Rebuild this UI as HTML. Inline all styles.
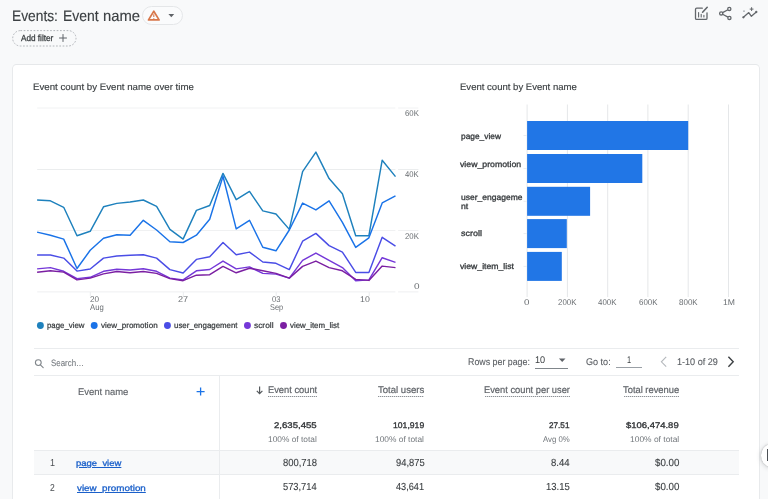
<!DOCTYPE html>
<html lang="en">
<head>
<meta charset="utf-8">
<title>Events: Event name</title>
<style>
  html, body { margin:0; padding:0; }
  body { width:768px; height:499px; overflow:hidden; background:#f8f9fa;
         font-family:"Liberation Sans", sans-serif; color:#3c4043; }
  #page { position:absolute; left:0; top:0; width:768px; height:499px; overflow:hidden; will-change:transform; }
  .t { position:absolute; white-space:nowrap; line-height:1; transform-origin:left top; text-rendering:geometricPrecision; }
  .sx { display:inline-block; transform-origin:left top; }
  .w { position:absolute; top:0; transform-origin:left top; }
  .dash { position:absolute; height:1px; background:repeating-linear-gradient(90deg, #8d9196 0 1px, #dcdee0 1px 2px); }
  #card { position:absolute; left:12.8px; top:64.8px; width:746.3px; height:460px; background:#fff;
          border-radius:3.5px; box-shadow:0 0 0 0.9px #e6e8ea, 0 1px 2px rgba(60,64,67,.06); }
  .hl { position:absolute; height:1px; background:#eaecee; }
  .chip { position:absolute; box-sizing:border-box; }
  svg { position:absolute; left:0; top:0; overflow:visible; }
  a.lnk { color:inherit; text-decoration:underline; text-decoration-thickness:0.8px; text-underline-offset:0.8px; }
</style>
</head>
<body>
<div id="page">

<!-- header chips -->
<div class="chip" style="left:142.4px; top:6.2px; width:40.4px; height:18.7px; border:1px solid #e4e6e8; border-radius:10px; background:#fafbfc;"></div>

<div id="card"></div>

<!-- table rules / row backgrounds -->
<div class="hl" style="left:34px; top:348px; width:705px;"></div>
<div class="hl" style="left:34px; top:375px; width:705px;"></div>
<div style="position:absolute; left:34px; top:450px; width:705px; height:24.5px; background:#f8f9fa; border-top:1px solid #eaecee; border-bottom:1px solid #eaecee; box-sizing:border-box;"></div>
<div style="position:absolute; left:219px; top:375px; width:1px; height:124px; background:#eaecee;"></div>
<div class="hl" style="left:535px; top:367.5px; width:32.5px; background:#80868b;"></div>
<div class="hl" style="left:616px; top:367px; width:26px; background:#9aa0a6;"></div>

<svg width="768" height="499" viewBox="0 0 768 499">
  <!-- header icons -->
  <g id="warn" fill="none" stroke="#d8774a" stroke-width="1.7" stroke-linejoin="round">
    <path d="M153.8 11.2 L159.1 19.9 L148.5 19.9 Z"/>
    <path d="M153.8 14.2 V17 M153.8 18 V18.8" stroke-width="1.1"/>
  </g>
  <path d="M168.4 14.1 h5.8 l-2.9 3.1 z" fill="#5f6368"/>
  <rect x="12.7" y="30.6" width="63.3" height="15.4" rx="7.7" fill="none" stroke="#a9adb2" stroke-width="0.9" stroke-dasharray="1.7 1.6"/>
  <path d="M63 34.1 v7.8 M59.1 38 h7.8" stroke="#5f6368" stroke-width="1" fill="none"/>

  <g id="ic-edit" fill="none" stroke="#63676b" stroke-width="1.3" stroke-linejoin="round" stroke-linecap="round">
    <path d="M702.3 8.2 H696.7 a1.2 1.2 0 0 0 -1.2 1.2 V18.2 a1.2 1.2 0 0 0 1.2 1.2 H705.8 a1.2 1.2 0 0 0 1.2 -1.2 V12.8"/>
    <path d="M698.6 12.6 V16.9 M701.2 14.2 V16.9 M703.9 15.2 V16.9" stroke-width="1.1"/>
    <path d="M702.6 12.2 L707.2 7.3" stroke-width="1.6"/>
  </g>
  <g id="ic-share" fill="none" stroke="#63676b" stroke-width="1.3">
    <circle cx="729.3" cy="8.9" r="1.6"/><circle cx="721.2" cy="13.4" r="1.6"/><circle cx="729.4" cy="17.9" r="1.6"/>
    <path d="M722.6 12.6 L727.9 9.7 M722.6 14.2 L728 17.1"/>
  </g>
  <g id="ic-ins" fill="none" stroke="#63676b" stroke-width="1.3" stroke-linejoin="round" stroke-linecap="round">
    <path d="M743.4 17.3 L748.8 12.6 L751.4 16.3 L756.3 12"/>
    <circle cx="743.4" cy="17.3" r="0.5"/><circle cx="756.3" cy="12" r="0.5"/>
    <path d="M751.6 7.6 V10.6 M750.1 9.1 H753.1" stroke-width="1"/>
    <path d="M743.6 11.1 h0.8" stroke-width="1.2" stroke="#9aa0a6"/>
  </g>

  <!-- line chart -->
  <path d="M37.2 108.0 H395.4 M398.1 108.0 H418.4" stroke="#f1f2f3" stroke-width="1" fill="none"/>
  <path d="M37.2 169.5 H395.4 M398.1 169.5 H418.4" stroke="#ebedee" stroke-width="1" fill="none"/>
  <path d="M37.2 230.5 H395.4 M398.1 230.5 H418.4" stroke="#f0f1f2" stroke-width="1" fill="none"/>
  <path d="M37.2 291.9 H395.4 M398.1 291.9 H418.4" stroke="#eeeff1" stroke-width="1" fill="none"/>
  <g stroke="#ebedef" stroke-width="1">
    <line x1="90.3" x2="90.3" y1="292" y2="296"/><line x1="183.3" x2="183.3" y1="292" y2="296"/>
    <line x1="276.2" x2="276.2" y1="292" y2="296"/><line x1="369.2" x2="369.2" y1="292" y2="296"/>
  </g>
  <polyline points="37.1,200.0 50.4,200.8 63.7,207.3 77.0,235.7 90.2,231.3 103.5,206.8 116.8,203.4 130.1,202.0 143.3,200.0 156.6,206.3 169.9,229.4 183.1,239.1 196.4,210.4 209.7,205.5 223.0,173.4 236.2,199.7 249.5,191.4 262.8,210.9 276.0,214.0 289.3,229.4 302.6,171.6 315.9,152.1 329.1,178.6 342.4,193.8 355.7,235.7 368.9,235.7 382.2,160.2 395.5,176.6" fill="none" stroke="#1e81bd" stroke-width="1.45" stroke-linejoin="round" stroke-linecap="butt"/>
  <polyline points="37.1,232.1 50.4,235.2 63.7,239.1 77.0,268.5 90.2,250.3 103.5,238.3 116.8,234.7 130.1,235.2 143.3,220.3 156.6,230.0 169.9,241.7 183.1,242.5 196.4,235.2 209.7,219.3 223.0,176.3 236.2,228.9 249.5,220.3 262.8,247.2 276.0,250.8 289.3,230.0 302.6,203.1 315.9,209.9 329.1,200.8 342.4,222.4 355.7,247.4 368.9,237.8 382.2,202.9 395.5,195.8" fill="none" stroke="#1a73e8" stroke-width="1.45" stroke-linejoin="round" stroke-linecap="butt"/>
  <polyline points="37.1,255.0 50.4,255.0 63.7,258.1 77.0,271.1 90.2,269.0 103.5,258.1 116.8,256.0 130.1,255.3 143.3,254.7 156.6,258.1 169.9,269.6 183.1,273.0 196.4,259.4 209.7,256.8 223.0,242.5 236.2,254.7 249.5,252.1 262.8,262.0 276.0,263.3 289.3,269.6 302.6,241.2 315.9,233.4 329.1,245.6 342.4,252.1 355.7,272.4 368.9,272.4 382.2,237.3 395.5,246.1" fill="none" stroke="#4a4de6" stroke-width="1.45" stroke-linejoin="round" stroke-linecap="butt"/>
  <polyline points="37.1,268.9 50.4,267.6 63.7,271.3 77.0,278.6 90.2,277.3 103.5,271.3 116.8,269.2 130.1,270.0 143.3,268.7 156.6,271.3 169.9,278.1 183.1,279.9 196.4,270.8 209.7,269.5 223.0,261.1 236.2,268.9 249.5,266.9 262.8,273.4 276.0,274.1 289.3,278.1 302.6,260.4 315.9,253.1 329.1,260.4 342.4,267.6 355.7,280.7 368.9,279.9 382.2,257.7 395.5,262.4" fill="none" stroke="#7538d8" stroke-width="1.45" stroke-linejoin="round" stroke-linecap="butt"/>
  <polyline points="37.1,272.3 50.4,270.8 63.7,272.1 77.0,279.9 90.2,278.1 103.5,273.9 116.8,271.5 130.1,272.8 143.3,271.5 156.6,273.4 169.9,278.6 183.1,280.7 196.4,275.2 209.7,274.7 223.0,266.4 236.2,272.8 249.5,268.2 262.8,270.8 276.0,273.4 289.3,278.1 302.6,266.4 315.9,261.1 329.1,267.6 342.4,270.8 355.7,279.4 368.9,280.4 382.2,266.1 395.5,267.6" fill="none" stroke="#7b1fa2" stroke-width="1.45" stroke-linejoin="round" stroke-linecap="butt"/>

  <!-- legend dots -->
  <circle cx="40.4" cy="325.5" r="3.45" fill="#1e81bd"/>
  <circle cx="94.2" cy="325.5" r="3.45" fill="#1a73e8"/>
  <circle cx="167.45" cy="325.5" r="3.45" fill="#4a4de6"/>
  <circle cx="247.45" cy="325.5" r="3.45" fill="#7538d8"/>
  <circle cx="283.5" cy="325.5" r="3.45" fill="#7b1fa2"/>

  <!-- bar chart -->
  <line x1="527.1" x2="527.1" y1="104.5" y2="297" stroke="#e5e7e9" stroke-width="1"/>
  <line x1="567.4" x2="567.4" y1="104.5" y2="297" stroke="#e5e7e9" stroke-width="1"/>
  <line x1="607.7" x2="607.7" y1="104.5" y2="297" stroke="#e5e7e9" stroke-width="1"/>
  <line x1="647.9" x2="647.9" y1="104.5" y2="297" stroke="#e5e7e9" stroke-width="1"/>
  <line x1="688.2" x2="688.2" y1="104.5" y2="297" stroke="#e5e7e9" stroke-width="1"/>
  <line x1="728.5" x2="728.5" y1="104.5" y2="297" stroke="#e5e7e9" stroke-width="1"/>
  <line x1="523.5" x2="527" y1="135.5" y2="135.5" stroke="#ebedef" stroke-width="1"/>
  <line x1="523.5" x2="527" y1="168.5" y2="168.5" stroke="#ebedef" stroke-width="1"/>
  <line x1="523.5" x2="527" y1="201.3" y2="201.3" stroke="#ebedef" stroke-width="1"/>
  <line x1="523.5" x2="527" y1="233.6" y2="233.6" stroke="#ebedef" stroke-width="1"/>
  <line x1="523.5" x2="527" y1="266.4" y2="266.4" stroke="#ebedef" stroke-width="1"/>
  <rect x="527.1" y="121.0" width="161.1" height="29" fill="#2176e6"/>
  <rect x="527.1" y="154.0" width="115.2" height="29" fill="#2176e6"/>
  <rect x="527.1" y="186.8" width="63.0" height="29" fill="#2176e6"/>
  <rect x="527.1" y="219.1" width="39.7" height="29" fill="#2176e6"/>
  <rect x="527.1" y="251.9" width="34.7" height="29" fill="#2176e6"/>

  <!-- table icons -->
  <g fill="none" stroke="#80868b" stroke-width="1.1">
    <circle cx="38.3" cy="362.6" r="2.9"/><path d="M40.4 364.8 L43.2 367.6" stroke-linecap="round"/>
  </g>
  <path d="M200.6 387.6 v8 M196.6 391.6 h8" stroke="#1a73e8" stroke-width="1.3" fill="none"/>
  <path d="M259.6 386.6 v7 M256.8 390.9 l2.8 2.8 l2.8 -2.8" stroke="#55595d" stroke-width="1.2" fill="none"/>
  <path d="M558.9 358.6 h6.6 l-3.3 3.4 z" fill="#5f6368"/>
  <path d="M666.2 356.9 L661.4 361.8 L666.2 366.7" stroke="#b4b8bc" stroke-width="1.1" fill="none"/>
  <path d="M728.4 356.8 L733.2 361.8 L728.4 366.8" stroke="#3c4043" stroke-width="1.4" fill="none"/>
</svg>

<!-- header -->
<div class="t" style="left:0; top:9px; font-size:15.3px; color:#3c4043; -webkit-text-stroke:0.15px #3c4043"><span class="w" style="left:11.90px; transform:scaleX(0.9004)">Events:</span> <span class="w" style="left:62.68px; transform:scaleX(0.9129)">Event</span> <span class="w" style="left:102.64px; transform:scaleX(0.9688)">name</span></div>
<div class="t" style="left:21.10px; top:34px; font-size:8.9px; color:#3c4043; -webkit-text-stroke:0.3px #3c4043; transform:scaleX(0.9223)">Add filter</div>
<!-- chart titles -->
<div class="t" style="left:33.12px; top:82px; font-size:9.4px; color:#3c4043; -webkit-text-stroke:0.15px #3c4043; transform:scaleX(1.0322)">Event count by Event name over time</div>
<div class="t" style="left:460.03px; top:82px; font-size:9.4px; color:#3c4043; -webkit-text-stroke:0.15px #3c4043; transform:scaleX(1.0190)">Event count by Event name</div>
<!-- line chart axis labels -->
<div class="t" style="left:404.61px; top:109px; font-size:8.4px; color:#696d71; transform:scaleX(0.9302)">60K</div>
<div class="t" style="left:404.85px; top:170px; font-size:8.4px; color:#696d71; transform:scaleX(0.9142)">40K</div>
<div class="t" style="left:404.61px; top:232px; font-size:8.4px; color:#696d71; transform:scaleX(0.9302)">20K</div>
<div class="t" style="left:413.60px; top:282px; font-size:8.4px; color:#696d71; transform:scaleX(1.1905)">0</div>
<div class="t" style="left:90.49px; top:295px; font-size:8.4px; color:#696d71; transform:scaleX(0.9756)">20</div>
<div class="t" style="left:90.00px; top:303px; font-size:8.4px; color:#696d71; transform:scaleX(0.9205)">Aug</div>
<div class="t" style="left:178.29px; top:295px; font-size:8.4px; color:#696d71; transform:scaleX(1.0903)">27</div>
<div class="t" style="left:272.20px; top:295px; font-size:8.4px; color:#696d71; transform:scaleX(0.9015)">03</div>
<div class="t" style="left:269.87px; top:303px; font-size:8.4px; color:#696d71; transform:scaleX(0.8779)">Sep</div>
<div class="t" style="left:359.84px; top:295px; font-size:8.4px; color:#696d71; transform:scaleX(1.0476)">10</div>
<!-- legend -->
<div class="t" style="left:46.69px; top:322px; font-size:8.0px; color:#35393c; -webkit-text-stroke:0.22px #35393c; transform:scaleX(0.9799)">page_view</div>
<div class="t" style="left:100.96px; top:322px; font-size:8.0px; color:#35393c; -webkit-text-stroke:0.22px #35393c; transform:scaleX(1.0112)">view_promotion</div>
<div class="t" style="left:173.89px; top:322px; font-size:8.0px; color:#35393c; -webkit-text-stroke:0.22px #35393c; transform:scaleX(0.9856)">user_engagement</div>
<div class="t" style="left:254.19px; top:322px; font-size:8.0px; color:#35393c; -webkit-text-stroke:0.22px #35393c; transform:scaleX(1.0435)">scroll</div>
<div class="t" style="left:290.26px; top:322px; font-size:8.0px; color:#35393c; -webkit-text-stroke:0.22px #35393c; transform:scaleX(0.9863)">view_item_list</div>
<!-- bar chart labels -->
<div class="t" style="left:460.56px; top:133px; font-size:8.2px; color:#35393c; -webkit-text-stroke:0.3px #35393c; transform:scaleX(1.0206)">page_view</div>
<div class="t" style="left:459.96px; top:161px; font-size:8.2px; color:#35393c; -webkit-text-stroke:0.3px #35393c; transform:scaleX(1.0674)">view_promotion</div>
<div class="t" style="left:460.55px; top:194px; font-size:8.2px; color:#35393c; -webkit-text-stroke:0.3px #35393c; transform:scaleX(1.0397)">user_engageme</div>
<div class="t" style="left:460.54px; top:203px; font-size:8.2px; color:#35393c; -webkit-text-stroke:0.3px #35393c; transform:scaleX(1.0591)">nt</div>
<div class="t" style="left:460.87px; top:230px; font-size:8.2px; color:#35393c; -webkit-text-stroke:0.3px #35393c; transform:scaleX(1.0997)">scroll</div>
<div class="t" style="left:459.96px; top:263px; font-size:8.2px; color:#35393c; -webkit-text-stroke:0.3px #35393c; transform:scaleX(1.0585)">view_item_list</div>
<div class="t" style="left:524.31px; top:298px; font-size:8.4px; color:#696d71; transform:scaleX(1.1657)">0</div>
<div class="t" style="left:558.00px; top:298px; font-size:8.4px; color:#696d71; transform:scaleX(0.9419)">200K</div>
<div class="t" style="left:598.44px; top:298px; font-size:8.4px; color:#696d71; transform:scaleX(0.9452)">400K</div>
<div class="t" style="left:638.50px; top:298px; font-size:8.4px; color:#696d71; transform:scaleX(0.9471)">600K</div>
<div class="t" style="left:678.58px; top:298px; font-size:8.4px; color:#696d71; transform:scaleX(0.9534)">800K</div>
<div class="t" style="left:722.65px; top:298px; font-size:8.4px; color:#696d71; transform:scaleX(1.0259)">1M</div>
<!-- table toolbar -->
<div class="t" style="left:50.84px; top:359px; font-size:9.2px; color:#74797e; -webkit-text-stroke:0.1px #74797e; transform:scaleX(0.8608)">Search…</div>
<div class="t" style="left:468.19px; top:358px; font-size:9.7px; color:#585c61; -webkit-text-stroke:0.1px #585c61; transform:scaleX(0.9125)">Rows per page:</div>
<div class="t" style="left:534.62px; top:356px; font-size:9.7px; color:#3c4043; transform:scaleX(0.9381)">10</div>
<div class="t" style="left:586.30px; top:358px; font-size:9.7px; color:#585c61; -webkit-text-stroke:0.1px #585c61; transform:scaleX(0.9352)">Go to:</div>
<div class="t" style="left:626.75px; top:356px; font-size:9.7px; color:#3c4043; transform:scaleX(0.7584)">1</div>
<div class="t" style="left:676.72px; top:358px; font-size:9.7px; color:#585c61; -webkit-text-stroke:0.1px #585c61; transform:scaleX(0.9368)">1-10 of 29</div>
<!-- table header -->
<div class="t" style="left:78.05px; top:388px; font-size:9.7px; color:#5f6368; -webkit-text-stroke:0.15px #5f6368; transform:scaleX(0.9726)">Event name</div>
<div class="t" style="left:267.55px; top:386px; font-size:9.7px; color:#5f6368; -webkit-text-stroke:0.2px #5f6368; transform:scaleX(0.9605)">Event count</div>
<div class="dash" style="left:268px; top:396px; width:49px;"></div>
<div class="t" style="left:378.21px; top:386px; font-size:9.7px; color:#5f6368; -webkit-text-stroke:0.2px #5f6368; transform:scaleX(0.9878)">Total users</div>
<div class="dash" style="left:378px; top:396px; width:46px;"></div>
<div class="t" style="left:483.85px; top:386px; font-size:9.7px; color:#5f6368; -webkit-text-stroke:0.2px #5f6368; transform:scaleX(0.9615)">Event count per user</div>
<div class="dash" style="left:485px; top:396px; width:85px;"></div>
<div class="t" style="left:623.31px; top:386px; font-size:9.7px; color:#5f6368; -webkit-text-stroke:0.2px #5f6368; transform:scaleX(0.9659)">Total revenue</div>
<div class="dash" style="left:624px; top:396px; width:55px;"></div>
<!-- totals -->
<div class="t" style="left:273.72px; top:422px; font-size:8.2px; color:#303336; -webkit-text-stroke:0.32px #303336; transform:scaleX(1.1720)">2,635,455</div>
<div class="t" style="left:392.75px; top:422px; font-size:8.2px; color:#303336; -webkit-text-stroke:0.32px #303336; transform:scaleX(1.0538)">101,919</div>
<div class="t" style="left:549.19px; top:422px; font-size:8.2px; color:#303336; -webkit-text-stroke:0.32px #303336; transform:scaleX(0.9989)">27.51</div>
<div class="t" style="left:626.11px; top:422px; font-size:8.2px; color:#303336; -webkit-text-stroke:0.32px #303336; transform:scaleX(1.1564)">$106,474.89</div>
<div class="t" style="left:267.67px; top:436px; font-size:8.2px; color:#72777c; transform:scaleX(1.0214)">100% of total</div>
<div class="t" style="left:375.37px; top:436px; font-size:8.2px; color:#72777c; transform:scaleX(1.0236)">100% of total</div>
<div class="t" style="left:542.70px; top:436px; font-size:8.2px; color:#72777c; transform:scaleX(0.9555)">Avg 0%</div>
<div class="t" style="left:629.87px; top:436px; font-size:8.2px; color:#72777c; transform:scaleX(1.0300)">100% of total</div>
<!-- rows -->
<div class="t" style="left:49.53px; top:459px; font-size:10.2px; color:#4a4e52; transform:scaleX(0.8790)">1</div>
<div class="t" style="left:76.48px; top:459px; font-size:8.6px; color:#1b60ca; -webkit-text-stroke:0.3px #1b60ca; transform:scaleX(1.1037)"><a class="lnk">page_view</a></div>
<div class="t" style="left:282.62px; top:459px; font-size:10.2px; color:#3a3e41; -webkit-text-stroke:0.12px #3a3e41; transform:scaleX(0.9263)">800,718</div>
<div class="t" style="left:395.88px; top:459px; font-size:10.2px; color:#3a3e41; -webkit-text-stroke:0.12px #3a3e41; transform:scaleX(0.9194)">94,875</div>
<div class="t" style="left:551.22px; top:459px; font-size:10.2px; color:#3a3e41; -webkit-text-stroke:0.12px #3a3e41; transform:scaleX(0.9387)">8.44</div>
<div class="t" style="left:655.10px; top:459px; font-size:10.2px; color:#3a3e41; -webkit-text-stroke:0.12px #3a3e41; transform:scaleX(0.9584)">$0.00</div>
<div class="t" style="left:49.77px; top:484px; font-size:10.2px; color:#4a4e52; transform:scaleX(0.8403)">2</div>
<div class="t" style="left:77.05px; top:484px; font-size:8.6px; color:#1b60ca; -webkit-text-stroke:0.3px #1b60ca; transform:scaleX(1.1435)"><a class="lnk">view_promotion</a></div>
<div class="t" style="left:283.23px; top:483px; font-size:10.2px; color:#3a3e41; -webkit-text-stroke:0.12px #3a3e41; transform:scaleX(0.9141)">573,714</div>
<div class="t" style="left:396.12px; top:483px; font-size:10.2px; color:#3a3e41; -webkit-text-stroke:0.12px #3a3e41; transform:scaleX(0.9002)">43,641</div>
<div class="t" style="left:545.89px; top:483px; font-size:10.2px; color:#3a3e41; -webkit-text-stroke:0.12px #3a3e41; transform:scaleX(0.9290)">13.15</div>
<div class="t" style="left:655.10px; top:483px; font-size:10.2px; color:#3a3e41; -webkit-text-stroke:0.12px #3a3e41; transform:scaleX(0.9584)">$0.00</div>

<!-- floating button on the right edge -->
<div style="position:absolute; left:761px; top:444px; width:22.6px; height:22.6px; border-radius:50%; background:#fff; box-shadow:0 0 1.5px rgba(60,64,67,.35), 0 1px 5px rgba(60,64,67,.22);"></div>
<div style="position:absolute; left:766.9px; top:449px; width:3px; height:11.6px; background:#4d5156;"></div>

</div>
</body>
</html>
